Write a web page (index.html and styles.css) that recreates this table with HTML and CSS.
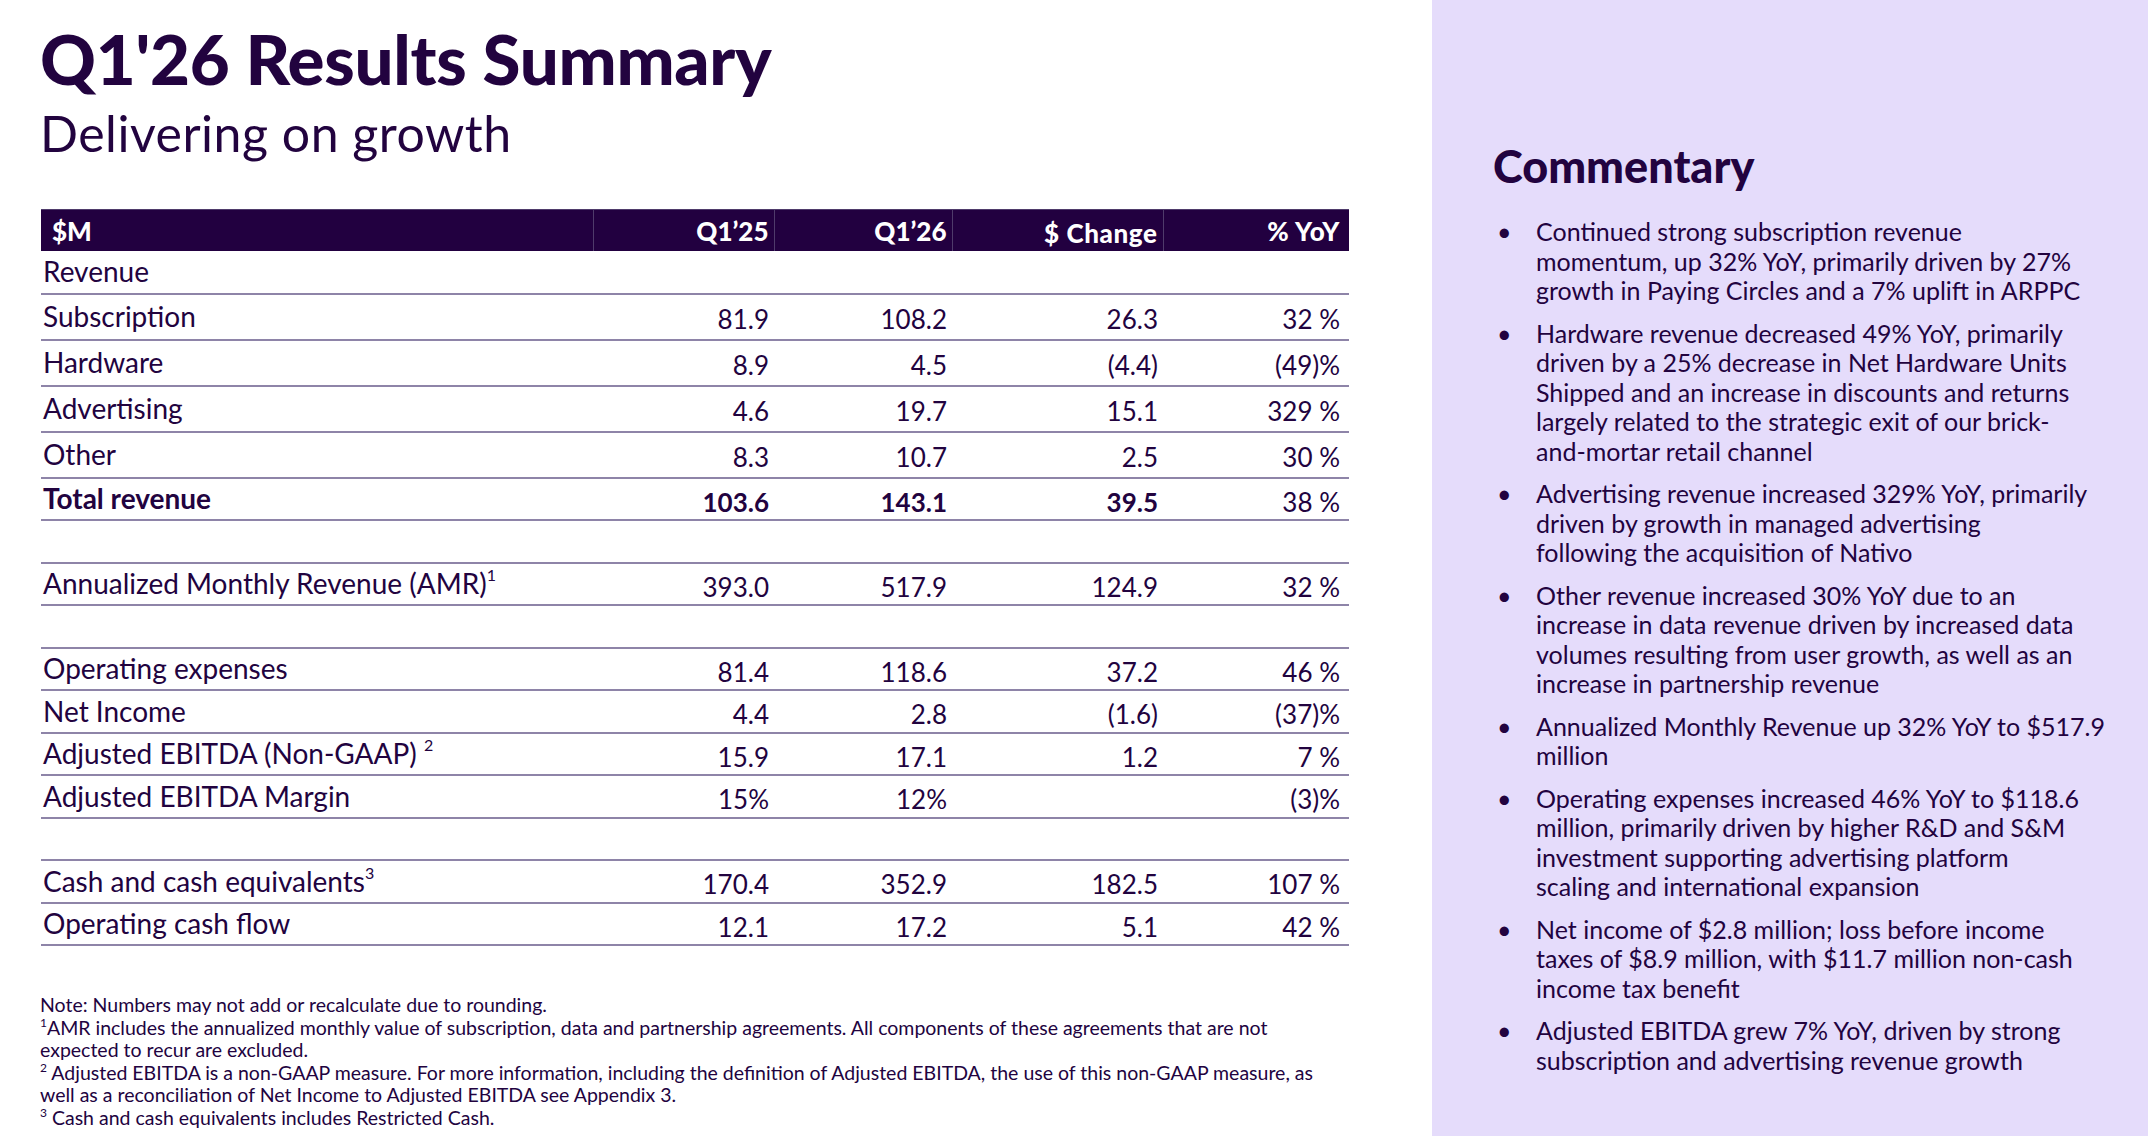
FILE: index.html
```html
<!DOCTYPE html>
<html lang="en">
<head>
    <meta charset="UTF-8">
    <meta name="viewport" content="width=device-width, initial-scale=1.0">
    <title>Q1'26 Results Summary</title>
    <link rel="stylesheet" href="styles.css">
</head>
<body>
    <div class="slide">
        <div class="main">
            <h1>Q1'26 Results Summary</h1>
            <h2>Delivering on growth</h2>

            <table class="results">
                <colgroup>
                    <col class="col-label">
                    <col class="col-q25">
                    <col class="col-q26">
                    <col class="col-change">
                    <col class="col-yoy">
                </colgroup>
                <thead>
                    <tr>
                        <th class="label">$M</th>
                        <th>Q1’25</th>
                        <th>Q1’26</th>
                        <th class="change">$ Change</th>
                        <th>% YoY</th>
                    </tr>
                </thead>
                <tbody>
                    <tr><td class="label">Revenue</td><td></td><td></td><td></td><td></td></tr>
                    <tr class="tall"><td class="label">Subscription</td><td>81.9</td><td>108.2</td><td>26.3</td><td>32 %</td></tr>
                    <tr class="tall"><td class="label">Hardware</td><td>8.9</td><td>4.5</td><td>(4.4)</td><td>(49)%</td></tr>
                    <tr class="tall"><td class="label">Advertising</td><td>4.6</td><td>19.7</td><td>15.1</td><td>329 %</td></tr>
                    <tr class="tall"><td class="label">Other</td><td>8.3</td><td>10.7</td><td>2.5</td><td>30 %</td></tr>
                    <tr class="total"><td class="label">Total revenue</td><td>103.6</td><td>143.1</td><td>39.5</td><td class="plain">38 %</td></tr>
                    <tr class="blank"><td colspan="5"></td></tr>
                    <tr><td class="label">Annualized Monthly Revenue (AMR)<sup>1</sup></td><td>393.0</td><td>517.9</td><td>124.9</td><td>32 %</td></tr>
                    <tr class="blank"><td colspan="5"></td></tr>
                    <tr><td class="label">Operating expenses</td><td>81.4</td><td>118.6</td><td>37.2</td><td>46 %</td></tr>
                    <tr><td class="label">Net Income</td><td>4.4</td><td>2.8</td><td>(1.6)</td><td>(37)%</td></tr>
                    <tr><td class="label">Adjusted EBITDA (Non-GAAP) <sup>2</sup></td><td>15.9</td><td>17.1</td><td>1.2</td><td>7 %</td></tr>
                    <tr><td class="label">Adjusted EBITDA Margin</td><td>15%</td><td>12%</td><td></td><td>(3)%</td></tr>
                    <tr class="blank"><td colspan="5"></td></tr>
                    <tr><td class="label">Cash and cash equivalents<sup>3</sup></td><td>170.4</td><td>352.9</td><td>182.5</td><td>107 %</td></tr>
                    <tr><td class="label">Operating cash flow</td><td>12.1</td><td>17.2</td><td>5.1</td><td>42 %</td></tr>
                </tbody>
            </table>

            <div class="notes">
                <p>Note: Numbers may not add or recalculate due to rounding.</p>
                <p><sup>1</sup>AMR includes the annualized monthly value of subscription, data and partnership agreements. All components of these agreements that are not<br>expected to recur are excluded.</p>
                <p><sup>2</sup> Adjusted EBITDA is a non-GAAP measure. For more information, including the definition of Adjusted EBITDA, the use of this non-GAAP measure, as<br>well as a reconciliation of Net Income to Adjusted EBITDA see Appendix 3.</p>
                <p><sup>3</sup> Cash and cash equivalents includes Restricted Cash.</p>
            </div>
        </div>

        <aside class="commentary">
            <h3>Commentary</h3>
            <ul>
                <li>Continued strong subscription revenue<br>momentum, up 32% YoY, primarily driven by 27%<br>growth in Paying Circles and a 7% uplift in ARPPC</li>
                <li>Hardware revenue decreased 49% YoY, primarily<br>driven by a 25% decrease in Net Hardware Units<br>Shipped and an increase in discounts and returns<br>largely related to the strategic exit of our brick-<br>and-mortar retail channel</li>
                <li>Advertising revenue increased 329% YoY, primarily<br>driven by growth in managed advertising<br>following the acquisition of Nativo</li>
                <li>Other revenue increased 30% YoY due to an<br>increase in data revenue driven by increased data<br>volumes resulting from user growth, as well as an<br>increase in partnership revenue</li>
                <li>Annualized Monthly Revenue up 32% YoY to $517.9<br>million</li>
                <li>Operating expenses increased 46% YoY to $118.6<br>million, primarily driven by higher R&amp;D and S&amp;M<br>investment supporting advertising platform<br>scaling and international expansion</li>
                <li>Net income of $2.8 million; loss before income<br>taxes of $8.9 million, with $11.7 million non-cash<br>income tax benefit</li>
                <li>Adjusted EBITDA grew 7% YoY, driven by strong<br>subscription and advertising revenue growth</li>
            </ul>
        </aside>
    </div>
</body>
</html>
```

FILE: styles.css
```css
body {
    margin: 0;
    padding: 0;
    font-family: Lato, "Noto Sans", sans-serif;
    color: #22033f;
    background: white;
}
.slide {
    display: flex;
    width: 2148px;
    height: 1136px;
    overflow: hidden;
}
.main {
    width: 1432px;
    padding: 18px 0 0 40px;
    box-sizing: border-box;
}
h1 {
    margin: 0;
    font-size: 69px;
    font-weight: 900;
    line-height: 1.2;
    letter-spacing: -0.3px;
}
h2 {
    margin: 5px 0 0;
    font-size: 50px;
    font-weight: 400;
    line-height: 1.1;
    letter-spacing: 0.5px;
}
.results {
    margin-top: 48px;
    margin-left: 1px;
    width: 1308px;
    border-collapse: collapse;
    table-layout: fixed;
}
.col-label { width: 552px; }
.col-q25 { width: 181px; }
.col-q26 { width: 178px; }
.col-change { width: 211px; }
.col-yoy { width: 186px; }
.results th {
    box-sizing: border-box;
    height: 42px;
    padding: 0 5px 0 0;
    background: #220040;
    color: white;
    font-size: 26px;
    font-weight: 900;
    text-align: right;
    border-left: 1px solid #4f3b6b;
    border-top: 1px solid #4f3b6b;
}
.results th.label {
    text-align: left;
    padding-left: 11px;
    border-left: none;
}
.results th.change {
    padding-top: 5px;
    letter-spacing: 0.6px;
}
.results th:last-child {
    padding-right: 9px;
    letter-spacing: 0.6px;
}
.results td {
    box-sizing: border-box;
    height: 42.5px;
    padding: 5px 5px 0 0;
    font-size: 26px;
    line-height: 1;
    text-align: right;
    vertical-align: middle;
    border-bottom: 2px solid #8e84a8;
}
.results tr.tall td {
    height: 46px;
}
.results td.label {
    text-align: left;
    font-size: 28px;
    padding: 0 0 2px 2px;
}
.results td:last-child {
    padding-right: 9px;
}
.results tr.blank td {
    padding: 0;
}
.results tr.total td {
    font-weight: 700;
}
.results tr.total td.plain {
    font-weight: 400;
}
.results sup {
    font-size: 16px;
    line-height: 0;
    vertical-align: 13px;
}
.notes {
    margin-top: 48px;
    font-size: 19.5px;
    line-height: 22.5px;
}
.notes p {
    margin: 0;
}
.notes sup {
    font-size: 12px;
    line-height: 0;
    vertical-align: 8px;
}
.commentary {
    flex: 1;
    background: #e5dcfb;
    padding: 139px 0 0 61px;
}
.commentary h3 {
    margin: 0;
    font-size: 45px;
    font-weight: 900;
    line-height: 1.2;
}
.commentary ul {
    list-style: none;
    margin: 24px 0 0;
    padding: 0;
    font-size: 25px;
    line-height: 29.5px;
}
.commentary li {
    display: grid;
    grid-template-columns: 43px 1fr;
    margin-bottom: 13px;
    white-space: nowrap;
}
.commentary li::before {
    content: "•";
    padding-left: 4px;
}
```
